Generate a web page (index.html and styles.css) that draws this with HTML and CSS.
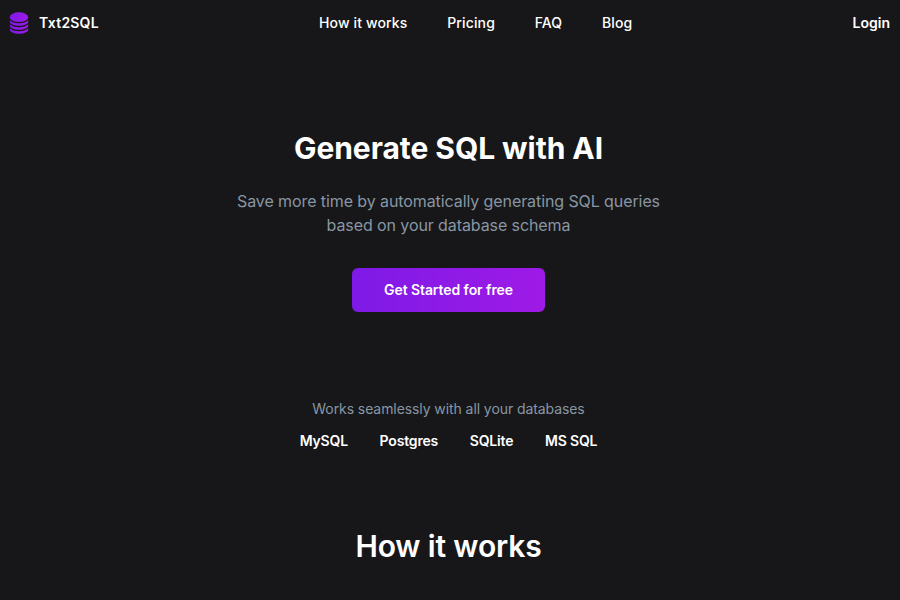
FILE: index.html
```html
<!DOCTYPE html>
<html lang="en">
<head>
    <meta charset="utf-8">
    <title>Txt2SQL</title>
    <link rel="stylesheet" href="styles.css">
</head>
<body>
    <header class="navbar">
        <a class="brand" href="#">
            <svg width="20" height="22" viewBox="0 0 20 22">
                <defs>
                    <linearGradient id="logo" x1="0" y1="0" x2="20" y2="0" gradientUnits="userSpaceOnUse">
                        <stop offset="0" stop-color="#7e1ae6"></stop>
                        <stop offset="1" stop-color="#9f1ae6"></stop>
                    </linearGradient>
                </defs>
                <g fill="url(#logo)">
                    <ellipse cx="10" cy="5.200" rx="9.200" ry="4.900"></ellipse>
                    <path d="M.8 8.300c1.800 1.900 5.200 2.900 9.200 2.900s7.400-1 9.200-2.900v1.500c0 2.200-4 4-9.200 4s-9.200-1.800-9.200-4z"></path>
                    <path d="M.8 12.300c1.800 1.900 5.200 2.900 9.200 2.900s7.400-1 9.200-2.900v1.500c0 2.200-4 4-9.200 4s-9.200-1.800-9.200-4z"></path>
                    <path d="M.8 16.300c1.800 1.900 5.200 2.900 9.200 2.900s7.400-1 9.200-2.900v1.500c0 2.200-4 4-9.200 4s-9.200-1.800-9.200-4z"></path>
                </g>
            </svg>
            <span>Txt2SQL</span>
        </a>
        <nav class="nav-links">
            <a href="#how">How it works</a>
            <a href="#pricing">Pricing</a>
            <a href="#faq">FAQ</a>
            <a href="#blog">Blog</a>
        </nav>
        <a class="login" href="#">Login</a>
    </header>

    <main>
        <section class="hero">
            <h1>Generate SQL with AI</h1>
            <p>Save more time by automatically generating SQL queries based on your database schema</p>
            <a class="cta" href="#">Get Started for free</a>
        </section>

        <section class="databases">
            <p>Works seamlessly with all your databases</p>
            <ul>
                <li>MySQL</li>
                <li>Postgres</li>
                <li>SQLite</li>
                <li>MS SQL</li>
            </ul>
        </section>

        <section class="how" id="how">
            <h2>How it works</h2>
        </section>
    </main>
</body>
</html>
```

FILE: styles.css
```css
* {
    margin: 0;
    padding: 0;
    box-sizing: border-box;
}

body {
    background: #171719;
    color: #fff;
    font-family: 'Inter', sans-serif;
    font-size: 14px;
    line-height: 20px;
    height: 600px;
    overflow: hidden;
}

a {
    color: inherit;
    text-decoration: none;
}

.navbar {
    display: flex;
    justify-content: space-between;
    align-items: center;
    height: 45px;
    padding: 0 10px 0 9px;
}

.brand {
    display: flex;
    align-items: center;
    gap: 10px;
    font-weight: 600;
    letter-spacing: 0.2px;
}

.nav-links {
    display: flex;
    gap: 39.7px;
    font-weight: 500;
    letter-spacing: 0.14px;
}

.login {
    font-weight: 600;
}

main {
    width: 897px;
}

.hero {
    display: flex;
    flex-direction: column;
    align-items: center;
    padding-top: 83px;
    text-align: center;
}

h1,
h2 {
    font-size: 30px;
    line-height: 40px;
    font-weight: 700;
}

h1 {
    letter-spacing: -0.05px;
}

.hero p {
    width: 448px;
    margin-top: 21px;
    color: #8896a3;
    font-size: 16px;
    line-height: 24px;
    letter-spacing: -0.09px;
}

.cta {
    margin-top: 31px;
    padding: 12px 32px;
    border-radius: 6px;
    background: linear-gradient(to right, #7e1ae6, #9f1ae6);
    font-weight: 600;
    letter-spacing: -0.08px;
}

.databases {
    margin-top: 87px;
    text-align: center;
}

.databases p {
    color: #8896a3;
    letter-spacing: -0.08px;
}

.databases ul {
    display: flex;
    justify-content: center;
    gap: 31.7px;
    margin-top: 12px;
    list-style: none;
    font-weight: 600;
    letter-spacing: -0.18px;
}

.how {
    margin-top: 75px;
    text-align: center;
}

.how h2 {
    font-weight: 600;
    letter-spacing: -0.15px;
}
```
